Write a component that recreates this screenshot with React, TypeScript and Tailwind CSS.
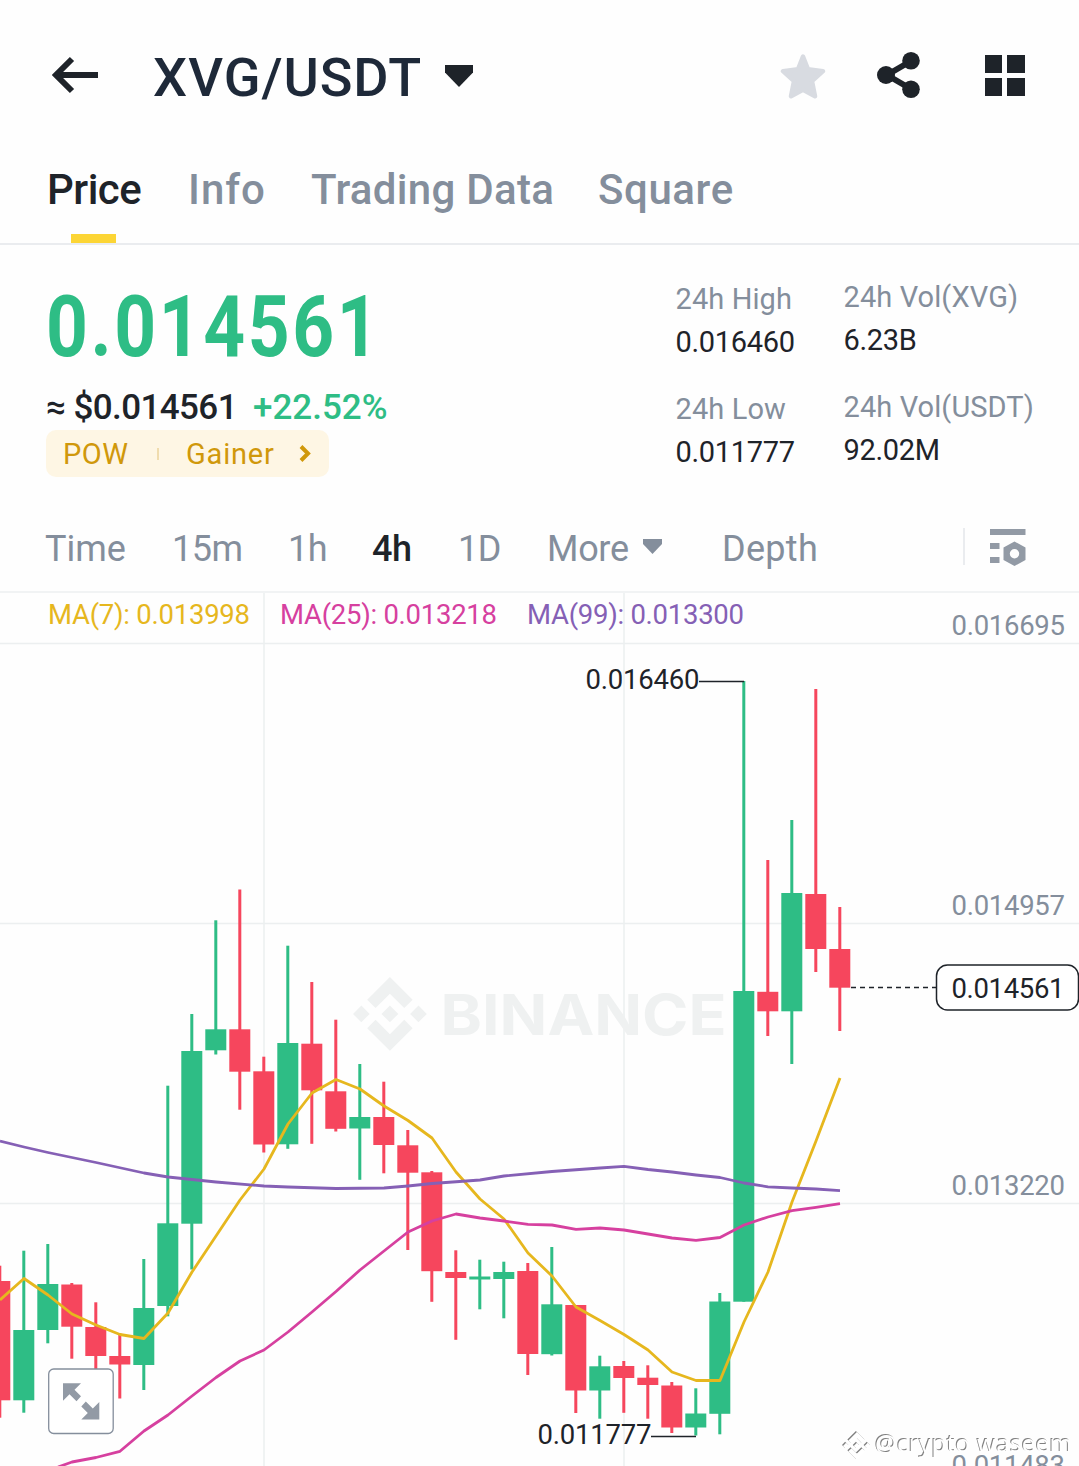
import React from 'react';

interface Candle {
  up: boolean;
  high: number;
  top: number;
  bottom: number;
  low: number;
}

interface StatProps {
  label: string;
  value: string;
}

const GREEN = '#2EBD85';
const RED = '#F6465D';

// [up, high, body top, body bottom, low]
const rows: [number, number, number, number, number][] = [
  [0, 1265.7, 1281, 1400.3, 1417.7],
  [1, 1250.7, 1330, 1400.3, 1412.7],
  [1, 1244, 1284, 1330, 1343.3],
  [0, 1283, 1284.5, 1326.7, 1358.7],
  [0, 1302.3, 1327, 1356, 1380],
  [0, 1333.3, 1356, 1364.5, 1398.5],
  [1, 1259, 1308, 1365, 1390],
  [1, 1085.7, 1223.3, 1306, 1316.3],
  [1, 1014, 1051, 1223.7, 1269.5],
  [1, 920.3, 1029.3, 1050.3, 1054.5],
  [0, 889.5, 1029.3, 1071.7, 1109.7],
  [0, 1056.7, 1071.3, 1144.5, 1152.5],
  [1, 945.7, 1043, 1144.3, 1148.8],
  [0, 982, 1043.7, 1090.3, 1143.8],
  [0, 1019.7, 1091.3, 1128.8, 1131.5],
  [1, 1064, 1117, 1128.5, 1179.8],
  [0, 1081.7, 1117, 1145, 1173.3],
  [0, 1130, 1145.3, 1172.7, 1250],
  [0, 1171, 1172.3, 1271.2, 1301.8],
  [0, 1250.3, 1272, 1278, 1339.8],
  [1, 1259.7, 1276.5, 1279.5, 1309.3],
  [1, 1261.7, 1272, 1279, 1318.3],
  [0, 1263, 1271, 1354, 1375],
  [1, 1247, 1304.3, 1354.2, 1355.5],
  [0, 1305, 1305, 1390.5, 1413],
  [1, 1355.7, 1366.3, 1390.5, 1418.7],
  [0, 1361, 1366, 1378, 1412.8],
  [0, 1365.3, 1377.7, 1385, 1418.7],
  [0, 1382, 1385.5, 1427.5, 1433],
  [1, 1388.3, 1413.5, 1427.5, 1435.5],
  [1, 1293, 1301.5, 1413.8, 1434.3],
  [1, 681, 991, 1301.7, 1301.7],
  [0, 860, 991.8, 1011.3, 1036],
  [1, 820, 893, 1011.3, 1064],
  [0, 689, 894, 949, 972],
  [0, 907, 949, 987.7, 1031],
];

const candles: Candle[] = rows.map(([up, high, top, bottom, low]) => ({
  up: up === 1,
  high,
  top,
  bottom,
  low,
}));

const ma7 =
  '0,1300 24,1278.5 48,1295 72,1314 96,1325 120,1334.5 144,1338.5 168,1313 192,1272 216,1236 240,1200 264,1169 288,1124 312,1093 336,1079.5 360,1089 384,1106 408,1120.5 432,1138 456,1172 480,1199 504,1219 528,1253 552,1276 576,1307 600,1320.5 624,1334.5 648,1350 672,1372 696,1380.5 720,1380.5 744,1322 768,1272 792,1202 816,1141 840,1078';
const ma25 =
  '58,1467 72,1462 96,1457.5 120,1451.3 144,1431 168,1415 192,1396 216,1377.5 240,1361 264,1350 288,1332 312,1312 336,1291.5 360,1270 384,1251 408,1232 432,1221 456,1214 480,1218 504,1221 528,1224.3 552,1225 576,1229.3 600,1228 624,1230 648,1234 672,1238 696,1240.3 720,1237.5 744,1225 768,1217 792,1210.7 816,1207.3 840,1203.7';
const ma99 =
  '0,1141 24,1147 48,1152.5 96,1162.5 144,1173 168,1177 216,1182 264,1186 288,1187 336,1188.5 384,1188 408,1186 432,1183.5 480,1180 504,1176 552,1171.5 600,1168 624,1166.3 648,1169.5 672,1172 696,1175 720,1177.5 744,1183 768,1186.8 792,1188 816,1189 840,1190.6';

const BinanceMark: React.FC = () => (
  <>
    <path d="M38.7 53.2 63.3 28.6l24.6 24.6 14.3-14.3L63.3 0 24.4 38.9z" />
    <path d="m0 63.3 14.3-14.3 14.3 14.3-14.3 14.3z" />
    <path d="m38.7 73.4 24.6 24.6 24.6-24.6 14.3 14.3-38.9 38.9-38.9-38.9z" />
    <path d="m98 63.3 14.3-14.3 14.3 14.3-14.3 14.3z" />
    <path d="M77.8 63.3 63.3 48.8 48.8 63.3l14.5 14.5z" />
  </>
);

const Header: React.FC = () => (
  <header className="flex h-[150px] items-center pl-[52px] pr-[54px]">
    <svg width="46" height="38" viewBox="0 0 46 38" className="shrink-0" fill="none" stroke="#1E2329" strokeWidth="6">
      <path d="M4 19h42" />
      <path d="M20 3 4 19l16 16" />
    </svg>
    <h1 className="ml-[55px] mt-[5px] w-[292px] whitespace-nowrap text-[54px] font-medium leading-none tracking-[0.9px] text-[#1E2939]">
      XVG/USDT
    </h1>
    <svg width="28" height="22" viewBox="0 0 28 22" fill="#1E2329" className="mt-[2px] shrink-0">
      <path d="M0 0h28v7.5L14 22 0 7.5z" />
    </svg>
    <div className="ml-auto flex items-center">
      <svg width="46" height="46" viewBox="0 0 46 46" className="mt-[2px]" fill="#D8DBE1" stroke="#D8DBE1" strokeWidth="4.500" strokeLinejoin="round">
        <path d="m23 3.500 5 12.700 15 2-11 10 3 15L23 36.700 11 43.200l3-15-11-10 15-2z" />
      </svg>
      <svg width="44" height="48" viewBox="0 0 44 48" className="ml-[51px]" fill="#1E2329" stroke="none">
        <path d="M34 10 10 24l24 14" fill="none" stroke="#1E2329" strokeWidth="6" />
        <circle cx="9" cy="24" r="9" />
        <circle cx="34" cy="9.700" r="8.800" />
        <circle cx="34" cy="38.300" r="8.800" />
      </svg>
      <div className="ml-[64px] grid grid-cols-[17px_18px] gap-[5px]">
        <span className="h-[18px] bg-[#1E2329]" />
        <span className="h-[18px] bg-[#1E2329]" />
        <span className="h-[18px] bg-[#1E2329]" />
        <span className="h-[18px] bg-[#1E2329]" />
      </div>
    </div>
  </header>
);

const Tabs: React.FC = () => (
  <nav className="flex h-[95px] border-b-2 border-[#EAECEF] pl-[47px] text-[42px] font-medium leading-[80px] text-[#848E9C]">
    <div className="relative w-[141px] text-[#1E2329]">
      <span className="tracking-[-0.500px]">Price</span>
      <span className="absolute bottom-0 left-[24px] h-[9px] w-[45px] bg-[#FCD535]" />
    </div>
    <div className="w-[123px] tracking-[1px]">Info</div>
    <div className="w-[287px] tracking-[0.300px]">Trading Data</div>
    <div className="tracking-[0.600px]">Square</div>
  </nav>
);

const Stat: React.FC<StatProps> = ({ label, value }) => (
  <div className="whitespace-nowrap text-[29px] leading-[43px]">
    <div className="tracking-[0.100px] text-[#848E9C]">{label}</div>
    <div className="tracking-[-0.300px] text-[#1E2329]">{value}</div>
  </div>
);

const Summary: React.FC = () => (
  <section className="flex h-[261px]">
    <div className="w-[675.5px] pl-[46px] pt-[37px]">
      <div className="h-[90px] w-[400px] origin-left scale-x-[0.850] whitespace-nowrap text-[86px] font-bold leading-[90px] tracking-[3px] text-[#2EBD85]">
        0.014561
      </div>
      <div className="flex h-[58px] items-center whitespace-nowrap pt-[14px] text-[35px] font-medium">
        <span className="w-[207px] tracking-[-0.600px] text-[#1E2329]">≈ $0.014561</span>
        <span className="text-[#2EBD85]">+22.52%</span>
      </div>
      <div className="flex h-[47px] w-[283px] items-center rounded-[10px] bg-[#FEF6E4] pl-[17px] text-[29px] text-[#D0980B]">
        <span className="w-[94px] pt-[2px] tracking-[0.500px]">POW</span>
        <span className="h-[12px] w-[2px] bg-[#F0DCAE]" />
        <span className="ml-[27px] w-[113px] pt-[2px] tracking-[0.800px]">Gainer</span>
        <svg width="12" height="17" viewBox="0 0 12 17" fill="none" stroke="#D0980B" strokeWidth="4">
          <path d="m2 1.500 7 7-7 7" />
        </svg>
      </div>
    </div>
    <div className="w-[168px] space-y-[24px] pt-[33px]">
      <Stat label="24h High" value="0.016460" />
      <Stat label="24h Low" value="0.011777" />
    </div>
    <div className="space-y-[24px] pt-[31px]">
      <Stat label="24h Vol(XVG)" value="6.23B" />
      <Stat label="24h Vol(USDT)" value="92.02M" />
    </div>
  </section>
);

const Intervals: React.FC = () => (
  <nav className="flex h-[87px] items-center border-b-2 border-[#F1F3F4] pl-[45px] text-[36px] text-[#848E9C]">
    <span className="w-[127px]">Time</span>
    <span className="w-[116px] tracking-[-0.500px]">15m</span>
    <span className="w-[84px] tracking-[-0.500px]">1h</span>
    <span className="w-[86px] font-medium tracking-[-0.500px] text-[#1E2329]">4h</span>
    <span className="w-[89px] tracking-[-0.500px]">1D</span>
    <span className="w-[95px] tracking-[-0.300px]">More</span>
    <svg width="19" height="15" viewBox="0 0 19 15" fill="#848E9C" className="-mt-[4px] ml-[1px]">
      <path d="M0 0h19v5L9.500 15 0 5z" />
    </svg>
    <span className="ml-[60px] w-[241px] tracking-[0.300px]">Depth</span>
    <span className="-mt-[5px] h-[37px] w-[2px] bg-[#EAECEF]" />
    <svg width="36" height="38" viewBox="0 0 36 38" className="-mt-[2px] ml-[25px]" fill="#929AA5">
      <path d="M0 0h35.500v6H0zM0 14h9.500v6H0zM0 28h9.500v6H0z" />
      <path fillRule="evenodd" d="m24.500 12.500 11 6v12.500l-11 6-11-6V18.500zM24.500 20a4.700 4.700 0 1 0 0 9.400 4.700 4.700 0 0 0 0-9.400z" />
    </svg>
  </nav>
);

const Chart: React.FC = () => (
  <svg width="1079" height="873" viewBox="0 593 1079 873" className="block" fontFamily="Roboto, sans-serif" fontSize="27.500">
    {/* grid */}
    <g stroke="#ECEFF0" strokeWidth="1.500">
      <path d="M0 643.500h1079M0 923.500h1079M0 1203.500h1079" />
      <path d="M264 593v873M624 593v873" />
    </g>

    {/* logo watermark */}
    <g fill="#EFF1F1">
      <g transform="translate(353 977) scale(0.583)">
        <BinanceMark />
      </g>
      <text x="440.500" y="1034.500" fontFamily="Inter, sans-serif" fontWeight="700" fontSize="57" textLength="286" lengthAdjust="spacingAndGlyphs">
        BINANCE
      </text>
    </g>

    {/* moving average legend */}
    <text x="48" y="624" fill="#E6B71E" textLength="202">MA(7): 0.013998</text>
    <text x="280" y="624" fill="#D6409F" textLength="217">MA(25): 0.013218</text>
    <text x="527" y="624" fill="#8560B5" textLength="217">MA(99): 0.013300</text>

    {/* candles */}
    {candles.map((c, i) => (
      <g key={i} fill={c.up ? GREEN : RED}>
        <rect x={i * 24 - 1.700} y={c.high} width="3" height={c.low - c.high} />
        <rect x={i * 24 - 10.700} y={c.top} width="21" height={c.bottom - c.top} />
      </g>
    ))}

    <g fill="none" strokeWidth="2.800" strokeLinejoin="round">
      <polyline points={ma7} stroke="#E6B71E" />
      <polyline points={ma25} stroke="#D6409F" />
      <polyline points={ma99} stroke="#8560B5" />
    </g>

    {/* high / low markers */}
    <g fill="#1E2329" stroke="none">
      <text x="585.500" y="689" textLength="114">0.016460</text>
      <text x="537.500" y="1444" textLength="114">0.011777</text>
    </g>
    <path d="M699 681.500h45M651 1436.500h45" stroke="#1E2329" strokeWidth="1.500" />

    {/* price axis */}
    <g fill="#848E9C">
      <text x="951.500" y="635" textLength="113.500">0.016695</text>
      <text x="951.500" y="915" textLength="113.500">0.014957</text>
      <text x="951.500" y="1195" textLength="113.500">0.013220</text>
      <text x="951.500" y="1475" textLength="113.500">0.011483</text>
    </g>

    {/* current price */}
    <path d="M851 987.500h85" stroke="#1E2329" strokeWidth="1.500" strokeDasharray="5 4" />
    <rect x="936.500" y="965" width="142" height="45" rx="11" fill="#fff" stroke="#1E2329" strokeWidth="1.500" />
    <text x="951.500" y="998" fill="#1E2329" textLength="113">0.014561</text>

    {/* fullscreen button */}
    <rect x="48.700" y="1369" width="64.500" height="64.500" rx="5" fill="#fff" stroke="#848E9C" strokeWidth="1.300" />
    <g fill="#929AA5">
      <path d="M63 1383.300h18l-6.500 6.500 6.500 6.500-4.500 5-7-7-6.500 6.500z" />
      <path d="M99.300 1419.500h-18l6.500-6.500-6.500-6.500 4.500-5 7 7 6.500-6.500z" />
    </g>

    {/* author watermark */}
    <g fill="#fff" className="[filter:drop-shadow(-0.800px_-0.800px_0.300px_#808080)]">
      <g transform="translate(843 1432) scale(0.220)">
        <BinanceMark />
      </g>
      <text x="875" y="1452" fontFamily="'Noto Sans', sans-serif" fontSize="24" textLength="197">
        @crypto waseem
      </text>
    </g>
  </svg>
);

const App: React.FC = () => {
  return (
    <main className="h-[1466px] w-[1079px] overflow-hidden bg-[#FEFEFE] font-['Roboto',sans-serif]">
      <Header />
      <Tabs />
      <Summary />
      <Intervals />
      <Chart />
    </main>
  );
};

export default App;
